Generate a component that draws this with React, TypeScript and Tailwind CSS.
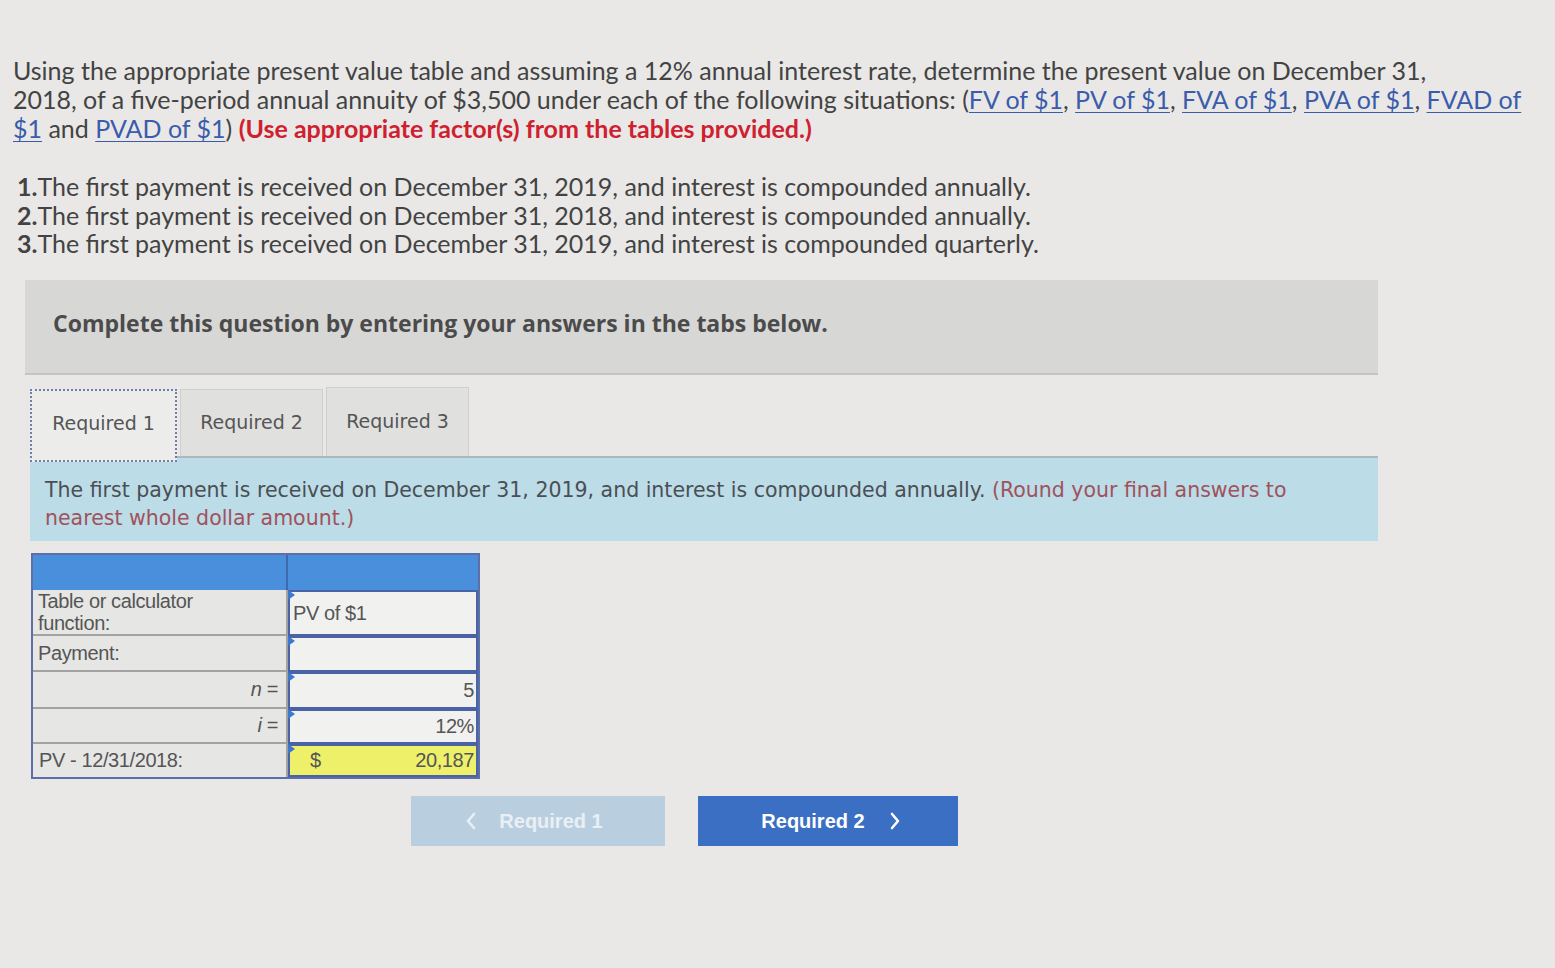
import React from 'react';

const link = 'text-[#3a5cab] underline decoration-1 underline-offset-[3px]';

function Chevron({ dir, className }: { dir: 'left' | 'right'; className?: string }) {
  return (
    <svg width="12" height="18" viewBox="0 0 12 18" fill="none" className={className}>
      <path
        d={dir === 'left' ? 'M9 2L3 9l6 7' : 'M3 2l6 7-6 7'}
        stroke="currentColor"
        strokeWidth="2.6"
        strokeLinecap="round"
        strokeLinejoin="round"
      />
    </svg>
  );
}

function InputCell({
  children,
  className = '',
  h,
  bg = 'bg-[#f1f1f0]',
}: {
  children?: React.ReactNode;
  className?: string;
  h: string;
  bg?: string;
}) {
  return (
    <div className={`relative border-2 border-[#4a62a6] ${bg} ${h} ${className}`}>
      {/* small blue marker in the corner of each input */}
      <span className="absolute -left-[2px] -top-[2px] h-0 w-0 border-l-[7px] border-t-[5px] border-b-[5px] border-l-[#3b78d0] border-t-transparent border-b-transparent" />
      {children}
    </div>
  );
}

export default function App() {
  return (
    <div className="min-h-[968px] w-full bg-[#e9e8e6] pt-[56px] font-['Lato','Liberation_Sans',sans-serif] text-[#434343]">
      {/* Question text */}
      <div className="pl-[13px] pr-4 text-[25px] leading-[29px]">
        <p>
          Using the appropriate present value table and assuming a 12% annual interest rate, determine the present value on December 31,
          <br />
          2018, of a five-period annual annuity of $3,500 under each of the following situations: (
          <span className={link}>FV of $1</span>, <span className={link}>PV of $1</span>,{' '}
          <span className={link}>FVA of $1</span>, <span className={link}>PVA of $1</span>,{' '}
          <span className={link}>FVAD of</span>
          <br />
          <span className={link}>$1</span> and <span className={link}>PVAD of $1</span>){' '}
          <span className="font-bold text-[#cf2030]">(Use appropriate factor(s) from the tables provided.)</span>
        </p>

        <ol className="mt-[29px] pl-[4px] leading-[28.5px]">
          <li>
            <span className="font-bold">1.</span>The first payment is received on December 31, 2019, and interest is compounded annually.
          </li>
          <li>
            <span className="font-bold">2.</span>The first payment is received on December 31, 2018, and interest is compounded annually.
          </li>
          <li>
            <span className="font-bold">3.</span>The first payment is received on December 31, 2019, and interest is compounded quarterly.
          </li>
        </ol>
      </div>

      <div className="ml-[25px] mt-[22px] w-[1353px]">
        {/* Instruction banner */}
        <div className="flex h-[95px] items-center border-b-2 border-[#c4c4c3] bg-[#d7d7d6] pl-[28px] pb-[6px] font-['Open_Sans','DejaVu_Sans',sans-serif] text-[23px] font-bold text-[#4b4b4b]">
          Complete this question by entering your answers in the tabs below.
        </div>

        {/* Tabs */}
        <div className="ml-[5px] mt-[12px] flex items-end gap-[3px] font-['DejaVu_Sans','Verdana',sans-serif] text-[19px] text-[#555]">
          <div className="z-10 -mb-[6px] flex h-[73px] w-[147px] items-center justify-center border-2 border-dotted border-[#6f7fa8] bg-[#ececeb] pb-[4px]">
            Required 1
          </div>
          <div className="flex h-[67px] w-[143px] items-center justify-center border border-[#cfcfce] border-b-0 bg-[#e0e0df]">
            Required 2
          </div>
          <div className="flex h-[69px] w-[143px] items-center justify-center border border-[#cfcfce] border-b-0 bg-[#e0e0df]">
            Required 3
          </div>
        </div>

        {/* Instruction panel */}
        <div className="ml-[5px] h-[85px] border-t-2 border-[#a9b9bf] bg-[#bcdce7] px-[15px] pt-[18px] font-['DejaVu_Sans','Verdana',sans-serif] text-[20.5px] leading-[28px] text-[#4a4f55]">
          The first payment is received on December 31, 2019, and interest is compounded annually.{' '}
          <span className="text-[#a0525c]">
            (Round your final answers to
            <br />
            nearest whole dollar amount.)
          </span>
        </div>

        {/* Answer table */}
        <div className="ml-[6px] mt-[12px] w-[449px] border-2 border-[#5c6fa8] font-['Liberation_Sans','Arial',sans-serif] text-[20px] tracking-[-0.02em] text-[#555]">
          <div className="flex h-[35px] bg-[#4a8fdc]">
            <div className="w-[255px] border-r-2 border-[#3e69ad]" />
            <div className="flex-1" />
          </div>
          <div className="grid grid-cols-[255px_1fr] bg-[#e6e6e5]">
            <div className="flex h-[46px] flex-col justify-center border-b-2 border-r-2 border-[#a3a3a3] pl-[5px] leading-[22px]">
              <span>Table or calculator</span>
              <span>function:</span>
            </div>
            <InputCell h="h-[46px]" className="flex items-center pl-[3px]">
              PV of $1
            </InputCell>

            <div className="flex h-[36px] items-center border-b-2 border-r-2 border-[#a3a3a3] pl-[5px]">Payment:</div>
            <InputCell h="h-[36px]" />

            <div className="flex h-[37px] items-center justify-end border-b-2 border-r-2 border-[#a3a3a3] pr-[8px]">
              <i>n</i>&nbsp;=
            </div>
            <InputCell h="h-[37px]" className="flex items-center justify-end pr-[2px]">
              5
            </InputCell>

            <div className="flex h-[35px] items-center justify-end border-b-2 border-r-2 border-[#a3a3a3] pr-[8px]">
              <i>i</i>&nbsp;=
            </div>
            <InputCell h="h-[35px]" className="flex items-center justify-end pr-[2px]">
              12%
            </InputCell>

            <div className="flex h-[33px] items-center border-r-2 border-[#a3a3a3] pl-[6px]">PV - 12/31/2018:</div>
            <InputCell h="h-[33px]" bg="bg-[#eef06a]" className="flex items-center justify-between pl-[20px] pr-[2px]">
              <span>$</span>
              <span>20,187</span>
            </InputCell>
          </div>
        </div>

        {/* Navigation buttons */}
        <div className="ml-[386px] mt-[17px] flex gap-[33px] font-['Liberation_Sans','Arial',sans-serif] text-[20px] font-bold">
          <div className="flex h-[50px] w-[254px] items-center justify-center gap-[22px] bg-[#b9cfe0] pr-[8px] text-[#e9eff4]">
            <Chevron dir="left" />
            <span>Required 1</span>
          </div>
          <div className="flex h-[50px] w-[260px] items-center justify-center gap-[24px] bg-[#3b6fc4] pl-[6px] text-white">
            <span>Required 2</span>
            <Chevron dir="right" />
          </div>
        </div>
      </div>
    </div>
  );
}
